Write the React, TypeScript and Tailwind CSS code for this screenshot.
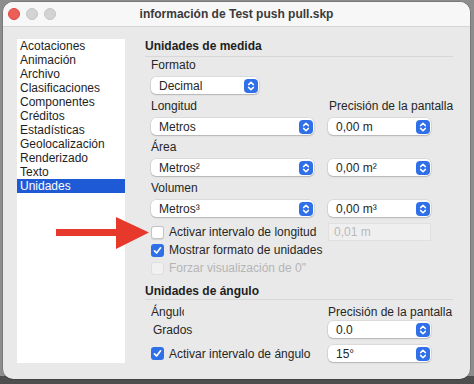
import React from 'react';

const sidebarItems = [
  'Acotaciones',
  'Animación',
  'Archivo',
  'Clasificaciones',
  'Componentes',
  'Créditos',
  'Estadísticas',
  'Geolocalización',
  'Renderizado',
  'Texto',
  'Unidades',
];

const Stepper = () => (
  <div className="w-[14px] h-[14px] rounded-[4px] bg-[#2f6fe8] flex items-center justify-center shrink-0">
    <svg width="14" height="14" viewBox="0 0 14 14" fill="none">
      <path d="M4.6 5.6 L7 3.3 L9.4 5.6" stroke="white" strokeWidth="1.5" strokeLinecap="round" strokeLinejoin="round" />
      <path d="M4.6 8.4 L7 10.7 L9.4 8.4" stroke="white" strokeWidth="1.5" strokeLinecap="round" strokeLinejoin="round" />
    </svg>
  </div>
);

const Popup = ({ value, width }: { value: React.ReactNode; width: string }) => (
  <div
    className={`${width} h-[17px] bg-white rounded-[5px] flex items-center justify-between pl-[8px] pr-[1px] shrink-0 shadow-[0_0_0_0.5px_rgba(0,0,0,0.12),0_1px_1.5px_rgba(0,0,0,0.18)]`}
  >
    <span className="text-[12px] text-[#262626] leading-none whitespace-nowrap">{value}</span>
    <Stepper />
  </div>
);

const Checkbox = ({ checked, disabled }: { checked?: boolean; disabled?: boolean }) => {
  if (checked) {
    return (
      <div className="w-[13px] h-[13px] rounded-[3px] bg-[#2f6fe8] flex items-center justify-center shrink-0">
        <svg width="11" height="11" viewBox="0 0 11 11" fill="none">
          <path d="M2.5 5.8 L4.6 8 L8.6 2.8" stroke="white" strokeWidth="1.7" strokeLinecap="round" strokeLinejoin="round" />
        </svg>
      </div>
    );
  }
  return (
    <div
      className={`w-[13px] h-[13px] rounded-[3px] shrink-0 ${
        disabled
          ? 'bg-[#f1f1f1] border border-[#dedede]'
          : 'bg-white border border-[#c4c4c4] shadow-[0_0.5px_1px_rgba(0,0,0,0.1)]'
      }`}
    />
  );
};

export default function App() {
  return (
    <div className="w-[474px] h-[384px] bg-[#8d8d8d] relative overflow-hidden font-['Liberation_Sans',Arial,sans-serif]">
      <div className="absolute left-0 right-0 bottom-0 h-[8px] bg-[#4e4e4e]" />
      <div className="relative ml-[3px] mt-[2px] w-[467px] h-[377px] rounded-[10px] overflow-hidden bg-[#e9e9e9] flex flex-col shadow-[0_0_0_0.5px_rgba(0,0,0,0.3)]">
        {/* title bar */}
        <div className="h-[25px] bg-[#f7f7f7] border-b border-[#d6d6d6] flex items-center relative shrink-0">
          <div className="flex items-center gap-[6px] pl-[5px]">
            <span className="w-[12px] h-[12px] rounded-full bg-[#ec5f57] border border-[#d8483f]" />
            <span className="w-[12px] h-[12px] rounded-full bg-[#d3d3d3] border border-[#c5c5c5]" />
            <span className="w-[12px] h-[12px] rounded-full bg-[#d3d3d3] border border-[#c5c5c5]" />
          </div>
          <div className="absolute inset-0 flex items-center justify-center text-[12px] font-bold text-[#3a3a3a]">
            información de Test push pull.skp
          </div>
        </div>

        {/* content */}
        <div className="flex flex-1 pl-[14px] pt-[12px] pr-[18px]">
          <div className="w-[108px] h-[324px] bg-white flex flex-col shrink-0">
            {sidebarItems.map((item) => (
              <div
                key={item}
                className={`h-[14px] pl-[3px] flex items-center text-[12px] leading-none ${
                  item === 'Unidades' ? 'bg-[#1f5ad6] text-white' : 'text-[#1e1e1e]'
                }`}
              >
                {item}
              </div>
            ))}
          </div>

          <div className="ml-[20px] flex-1 flex flex-col text-[12px] text-[#262626] whitespace-nowrap">
            <div className="h-[18px] pb-[4px] flex items-center font-bold text-[#1e1e1e] border-b border-[#d7d7d7]">
              Unidades de medida
            </div>

            <div className="pl-[6px] flex flex-col">
              <div className="h-[16px] flex items-center">Formato</div>
              <div className="mt-1">
                <Popup value="Decimal" width="w-[108px]" />
              </div>

              <div className="mt-1 h-[16px] flex items-center">
                <span className="w-[177px] shrink-0">Longitud</span>
                <span className="pl-[1px]">Precisión de la pantalla</span>
              </div>
              <div className="mt-1 flex items-center gap-[14px]">
                <Popup value="Metros" width="w-[163px]" />
                <Popup value="0,00 m" width="w-[103px]" />
              </div>

              <div className="mt-1 h-[16px] flex items-center">Área</div>
              <div className="mt-1 flex items-center gap-[14px]">
                <Popup value="Metros²" width="w-[163px]" />
                <Popup value="0,00 m²" width="w-[103px]" />
              </div>

              <div className="mt-1 h-[16px] flex items-center">Volumen</div>
              <div className="mt-1 flex items-center gap-[14px]">
                <Popup value="Metros³" width="w-[163px]" />
                <Popup value="0,00 m³" width="w-[103px]" />
              </div>

              <div className="mt-[6px] h-[18px] flex items-center">
                <div className="w-[177px] shrink-0 flex items-center gap-[5px]">
                  <Checkbox />
                  <span>Activar intervalo de longitud</span>
                </div>
                <div className="w-[103px] h-[18px] bg-[#efefef] border border-[#e0e0e0] flex items-center pl-[5px] text-[#b9b9b9]">
                  0,01 m
                </div>
              </div>
              <div className="h-[18px] flex items-center gap-[5px]">
                <Checkbox checked />
                <span>Mostrar formato de unidades</span>
              </div>
              <div className="h-[18px] flex items-center gap-[5px]">
                <Checkbox disabled />
                <span className="text-[#b5b5b5]">Forzar visualización de 0"</span>
              </div>
            </div>

            <div className="mt-[4px] h-[19px] pt-[1px] flex items-center font-bold text-[#1e1e1e] border-b border-[#d7d7d7]">
              Unidades de ángulo
            </div>

            <div className="pl-[6px] flex flex-col">
              <div className="mt-[4px] h-[16px] flex items-center">
                <div className="w-[177px] shrink-0">
                  <span className="block w-[33px] overflow-hidden">Ángulo</span>
                </div>
                <span>Precisión de la pantalla</span>
              </div>
              <div className="mt-[1px] h-[17px] flex items-center">
                <span className="w-[177px] shrink-0 pl-[2px]">Grados</span>
                <Popup value="0.0" width="w-[103px]" />
              </div>
              <div className="mt-[7px] h-[17px] flex items-center">
                <div className="w-[177px] shrink-0 flex items-center gap-[5px]">
                  <Checkbox checked />
                  <span>Activar intervalo de ángulo</span>
                </div>
                <Popup value="15°" width="w-[103px]" />
              </div>
            </div>
          </div>
        </div>
      </div>

      {/* red annotation arrow */}
      <svg className="absolute left-[54px] top-[215px]" width="100" height="36" viewBox="0 0 100 36">
        <rect x="2" y="14" width="62" height="7" fill="#e6392b" />
        <polygon points="62,2 95,17.5 62,34" fill="#e6392b" />
      </svg>
    </div>
  );
}
